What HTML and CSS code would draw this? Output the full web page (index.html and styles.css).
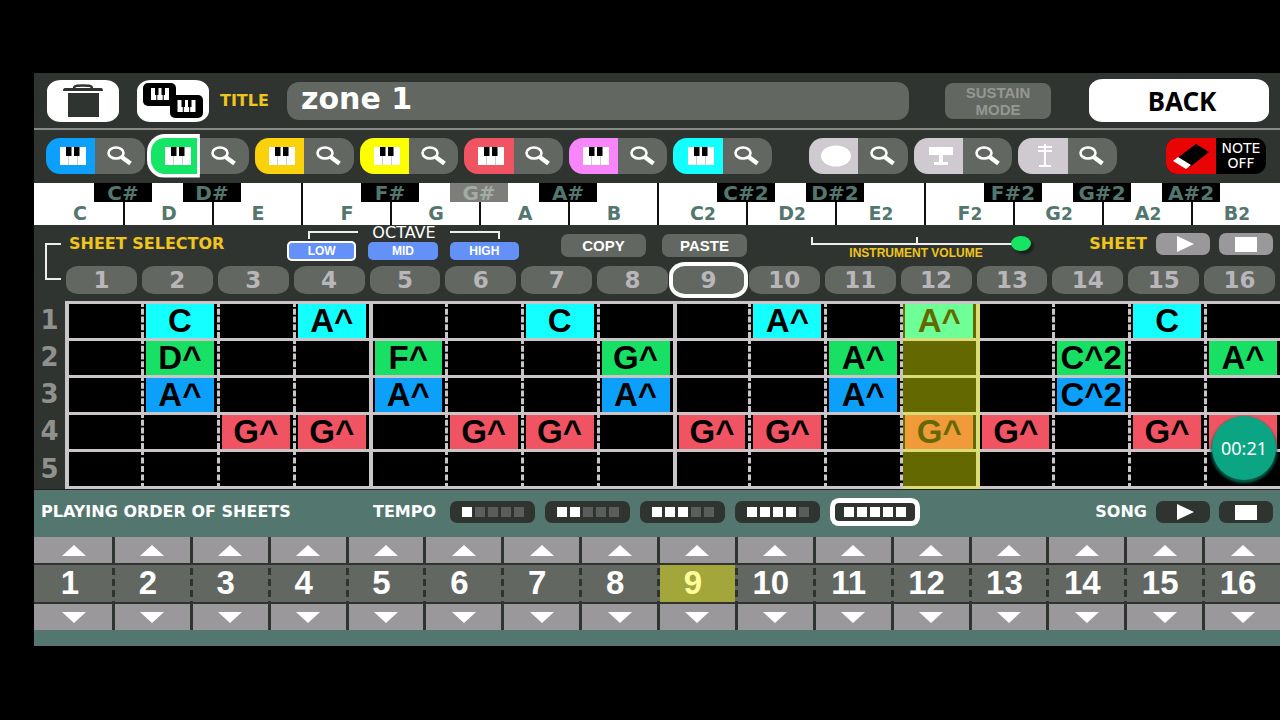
FILE: index.html
```html
<!DOCTYPE html>
<html lang="en">
<head>
<meta charset="utf-8">
<meta name="viewport" content="width=device-width, initial-scale=1">
<title>zone 1</title>
<link rel="stylesheet" href="styles.css">
</head>
<body>
<svg class="sprite" aria-hidden="true">
  <symbol id="i-keys" viewBox="0 0 26 18"><path fill="#fff" d="M0 0h26v18H0z"/><path stroke="#0003" stroke-width="1" d="M8.500 9v9M17.500 9v9"/><path fill="#000" d="M6 0h5.500v9H6zM14 0h5.500v9H14z"/></symbol>
  <symbol id="i-zoom" viewBox="0 0 26 20"><ellipse cx="9" cy="7" rx="7.500" ry="5.500" fill="none" stroke="#fff" stroke-width="2.600"/><path d="M14 10.500l9.500 7" stroke="#fff" stroke-width="4.500"/></symbol>
  <symbol id="i-trash" viewBox="0 0 42 34"><path d="M12 4.500c0-3 3-3 9-3s9 0 9 3" fill="none" stroke="#2f3430" stroke-width="2.500"/><path fill="#2f3430" d="M3 4h36q2 0 2 3H1q0-3 2-3zM6 9h31v24H6z"/></symbol>
  <symbol id="i-copykeys" viewBox="0 0 60 36"><rect width="33" height="23" rx="5"/><rect x="27" y="12" width="33" height="23" rx="5"/><g id="mini"><path fill="#fff" d="M8 5h18v12H8z"/><path d="M12 5h3.500v7H12zM18.500 5H22v7h-3.500zM13.300 12h1v5h-1zM19.700 12h1v5h-1z"/></g><use href="#mini" x="26.500" y="12"/></symbol>
  <symbol id="i-drum" viewBox="0 0 30 22"><ellipse cx="15" cy="11" rx="15" ry="10.500" fill="#fff"/></symbol>
  <symbol id="i-snare" viewBox="0 0 24 18"><path fill="#fff" d="M0 0h24v8H14v7h5v3H5v-3h5V8H0z"/></symbol>
  <symbol id="i-hat" viewBox="0 0 16 24"><path fill="#fff" d="M7 0h2v21h5v2H2v-2h5zM1 2h14v2H1zM1 6h14v2H1z"/></symbol>
  <symbol id="i-eraser" viewBox="0 0 38 26"><path d="M24 1l13 8-19 15-14-8z"/><path fill="#fff" d="M6 14l13 8-5 4-13-8z"/></symbol>
  <symbol id="i-play" viewBox="0 0 17 16"><path fill="#fff" d="M0 0l17 8-17 8z"/></symbol>
  <symbol id="i-stop" viewBox="0 0 22 15"><path fill="#fff" d="M0 0h22v15H0z"/></symbol>
  <symbol id="i-up" viewBox="0 0 24 11"><path fill="#fff" d="M12 0l12 11H0z"/></symbol>
  <symbol id="i-down" viewBox="0 0 24 11"><path fill="#fff" d="M0 0h24L12 11z"/></symbol>
</svg>

<main class="app">
  <header class="titlebar">
    <button class="tile" aria-label="Delete"><svg class="trash-icon"><use href="#i-trash"/></svg></button>
    <button class="tile" aria-label="Duplicate"><svg class="dup-icon"><use href="#i-copykeys"/></svg></button>
    <label class="caption" for="title">TITLE</label>
    <input class="title-input" id="title" type="text" value="zone 1">
    <button class="sustain" disabled>SUSTAIN<br>MODE</button>
    <button class="back">BACK</button>
  </header>

  <nav class="instruments" aria-label="Instruments">
    <div class="melodic" id="melodic"></div>
    <div class="drums" id="drums"></div>
    <button class="note-off"><span class="note-off-icon"><svg><use href="#i-eraser"/></svg></span><span class="note-off-text">NOTE<br>OFF</span></button>
  </nav>

  <ul class="keyboard" id="keyboard"></ul>

  <section class="sheet-head">
    <span class="bracket"></span>
    <div class="controls">
      <h2 class="caption selector-title">SHEET SELECTOR</h2>
      <div class="octave">
        <div class="octave-head"><span class="octave-line start"></span><span class="octave-name">OCTAVE</span><span class="octave-line end"></span></div>
        <div class="octave-buttons"><button class="selected">LOW</button><button>MID</button><button>HIGH</button></div>
      </div>
      <div class="clipboard"><button>COPY</button><button>PASTE</button></div>
      <div class="volume">
        <input id="volume" type="range" min="0" max="100" value="100">
        <label for="volume">INSTRUMENT VOLUME</label>
      </div>
      <div class="transport">
        <span class="caption">SHEET</span>
        <button aria-label="Play sheet"><svg class="play"><use href="#i-play"/></svg></button>
        <button aria-label="Stop sheet"><svg class="stop"><use href="#i-stop"/></svg></button>
      </div>
    </div>
    <div class="sheets" id="sheets"></div>
  </section>

  <section class="pattern">
    <table><tbody id="grid"></tbody></table>
    <div class="timer">00:21</div>
  </section>

  <section class="song">
    <div class="song-bar">
      <h2 class="song-label order-title">PLAYING ORDER OF SHEETS</h2>
      <span class="song-label">TEMPO</span>
      <div class="tempos" id="tempos"></div>
      <div class="transport dark">
        <span class="song-label">SONG</span>
        <button aria-label="Play song"><svg class="play"><use href="#i-play"/></svg></button>
        <button aria-label="Stop song"><svg class="stop"><use href="#i-stop"/></svg></button>
      </div>
    </div>
    <div class="order" id="order"></div>
  </section>
</main>
<script src="app.js"></script>
</body>
</html>
```

FILE: styles.css
```css
:root {
  --dark: #2f3430;
  --gray: #636762;
  --light: #9b989c;
  --line: #c9c5c9;
  --teal: #53776f;
  --gold: #f0c51c;
  --wide: "DejaVu Sans", Verdana, sans-serif;
  --plain: "Liberation Sans", Arial, sans-serif;
}
* { box-sizing: border-box; }
body {
  margin: 0;
  padding: 73px 0 73px 34px;
  background: #000;
  color: #fff;
  font-family: var(--plain);
}
button { border: 0; padding: 0; margin: 0; color: inherit; font: inherit; cursor: pointer; }
h2 { margin: 0; }
.sprite { position: absolute; width: 0; height: 0; }
.app { background: var(--dark); overflow: hidden; }
.caption { color: var(--gold); font: bold 16px/20px var(--wide); }

.titlebar {
  display: flex;
  align-items: center;
  height: 57px;
  padding: 0 11px 0 13px;
  border-bottom: 2px solid #898b86;
}
.tile {
  display: grid;
  place-items: center;
  width: 72px;
  height: 42px;
  margin-right: 18px;
  border-radius: 14px / 11px;
  background: #fff;
}
.tile + .caption { width: 67px; margin-left: -7px; }
.trash-icon { width: 42px; height: 34px; }
.dup-icon { width: 60px; height: 36px; }
.title-input {
  flex: 1;
  min-width: 0;
  height: 38px;
  margin-right: 36px;
  padding: 0 14px 4px;
  border: 0;
  border-radius: 12px;
  background: var(--gray);
  color: #fff;
  font: bold 30px/34px var(--wide);
}
.sustain {
  width: 106px;
  height: 36px;
  margin-right: 38px;
  border-radius: 8px;
  background: var(--gray);
  color: #959792;
  font: bold 15px/17px var(--plain);
}
.back {
  width: 180px;
  height: 43px;
  padding-left: 6px;
  border-radius: 14px / 11px;
  background: #fff;
  color: #000;
  font: bold 26px/36px "Noto Sans", sans-serif;
}

.instruments {
  display: flex;
  align-items: center;
  height: 53px;
  padding: 0 14px 2px 12px;
}
.melodic, .drums { display: grid; gap: 6px; }
.melodic { flex: 726; grid-template-columns: repeat(7, 1fr); margin-right: 37px; }
.drums { flex: 308; grid-template-columns: repeat(3, 1fr); margin-right: 49px; }
.instrument { display: grid; grid-template-columns: 1fr 1fr; height: 36px; }
.instrument button { display: grid; place-items: center; }
.instrument .voice { padding-left: 5px; border-radius: 14px 0 0 14px; }
.voice.selected {
  box-shadow: 0 0 0 4px #fff, inset -3px 0 #fff;
  clip-path: inset(-4px 0 -4px -4px);
}
.search { border-radius: 0 14px 14px 0; background: var(--gray); }
.search svg { width: 26px; height: 20px; }
.i-keys { width: 26px; height: 18px; }
.i-drum { width: 30px; height: 22px; }
.i-snare { width: 24px; height: 18px; }
.i-hat { width: 16px; height: 24px; }
.blue { background: #0ca0fb; }
.green { background: #14e565; }
.gold { background: #fad20c; }
.yellow { background: #fcff00; }
.red { background: #f05462; }
.pink { background: #f686fa; }
.cyan { background: #14ffff; }
.drum { background: #cfcacf; }
.note-off {
  display: grid;
  grid-template-columns: 1fr 1fr;
  flex: 0 0 100px;
  height: 36px;
  overflow: hidden;
  border-radius: 11px;
  background: #000;
}
.note-off-icon { display: grid; place-items: center; background: #e80404; }
.note-off-icon svg { width: 38px; height: 26px; }
.note-off-text { align-self: center; font: 14px/15px var(--wide); }

.keyboard { display: flex; margin: 0; padding: 0; list-style: none; }
.keyboard li { position: relative; flex: 1; border-left: 2px solid #111; }
.keyboard li:first-child { border-color: #fff; }
.white-key {
  display: block;
  width: 100%;
  height: 42px;
  padding: 18px 0 0 1px;
  background: #fff;
  color: var(--teal);
  font: bold 19px/24px var(--wide);
}
.white-key small { font-size: 17px; }
.black-key {
  position: absolute;
  z-index: 1;
  top: 0;
  right: -29px;
  width: 58px;
  height: 19px;
  background: #000;
  color: var(--teal);
  font: bold 20px/21px var(--wide);
}
.black-key:disabled { background: #7d7d7a; color: #a3aca7; }

.sheet-head {
  display: grid;
  grid-template-columns: 32px 1fr;
  grid-template-rows: 41px 28px;
  padding: 0 5px 7px 0;
}
.bracket {
  grid-row: 1 / 3;
  width: 16px;
  height: 37px;
  margin: 18px 0 0 11px;
  border: 2px solid #eee;
  border-right: 0;
}
.controls { display: flex; align-items: flex-start; }
.selector-title { width: 218px; margin: 9px 0 0 3px; white-space: nowrap; }
.octave { width: 232px; margin-right: 42px; }
.octave-head { display: flex; height: 16px; padding: 0 19px 0 21px; }
.octave-name { flex: 0 0 auto; margin: 0 14px; font: 16px/16px var(--wide); }
.octave-line { flex: 1; height: 8px; margin-top: 6px; border-top: 2px solid #eee; }
.octave-line.start { border-left: 2px solid #eee; }
.octave-line.end { border-right: 2px solid #eee; }
.octave-buttons { display: grid; grid-template-columns: repeat(3, 1fr); gap: 12px; }
.octave-buttons button {
  height: 18px;
  margin-top: 1px;
  border-radius: 5px;
  background: #6491f8;
  font: bold 12px/18px var(--plain);
}
.octave-buttons .selected { box-shadow: inset 0 0 0 2px #fff; height: 20px; margin-top: 0; }
.clipboard { display: flex; gap: 16px; margin: 9px 64px 0 0; }
.clipboard button {
  width: 85px;
  height: 23px;
  border-radius: 7px;
  background: var(--gray);
  font: bold 15px/23px var(--plain);
}
.volume { display: flex; flex-direction: column; align-items: center; width: 220px; padding-top: 10px; }
.volume input {
  appearance: none;
  width: 100%;
  height: 16px;
  margin: 0;
  background:
    linear-gradient(#eee, #eee) 0 8px / 210px 2px no-repeat,
    linear-gradient(#eee, #eee) 0 2px / 2px 8px no-repeat,
    linear-gradient(#eee, #eee) 105px 2px / 2px 8px no-repeat;
}
.volume input::-webkit-slider-thumb {
  appearance: none;
  width: 20px;
  height: 15px;
  border-radius: 50%;
  background: #16e462;
  box-shadow: 3px 3px 2px #1b1e1b;
}
.volume label { margin: -4px 10px 0 0; color: var(--gold); font: bold 12px/12px var(--plain); }
.transport { display: flex; align-items: center; gap: 9px; margin: 8px 2px 0 auto; }
.transport button {
  display: grid;
  place-items: center;
  width: 54px;
  height: 22px;
  border-radius: 7px;
  background: var(--light);
}
.transport.dark { margin: 0 7px 0 auto; }
.transport.dark button { background: var(--dark); }
.play { width: 17px; height: 16px; margin-left: 5px; }
.stop { width: 22px; height: 15px; }
.sheets { display: grid; grid-template-columns: repeat(16, 1fr); gap: 5px; }
.sheets button {
  border-radius: 12px / 10px;
  background: var(--gray);
  color: #b9b6b9;
  font: bold 23px/28px var(--wide);
}
.sheets .selected { box-shadow: 0 0 0 4px #fff; }

.pattern { position: relative; }
.pattern table {
  width: 100%;
  table-layout: fixed;
  border-spacing: 0;
  border-bottom: 1px solid #222;
}
.pattern th {
  width: 31px;
  padding: 0;
  color: #90908d;
  font: bold 26px/34px var(--wide);
}
.pattern td {
  position: relative;
  height: 37px;
  padding: 0 3px 0 2px;
  border-top: 3px solid var(--line);
  border-left: 3px dashed var(--line);
  background: #000;
  color: #000;
}
.pattern td.bar { border-left: 4px solid var(--line); }
.pattern tr:last-child td { height: 40px; border-bottom: 3px solid var(--line); }
.pattern td.playing::after {
  content: "";
  position: absolute;
  z-index: 1;
  inset: 0 -4px -3px 0;
  background: rgb(240 255 0 / 41%);
}
.note {
  display: block;
  width: 100%;
  height: 34px;
  color: #000;
  font: bold 33px/34px var(--plain);
}
.note.green { background: #18e064; }
.timer {
  position: absolute;
  z-index: 2;
  right: 4px;
  top: 115px;
  width: 64px;
  height: 64px;
  border-radius: 50%;
  background: #0ba583;
  box-shadow: 0 2px 3px 1px #08604d;
  font: 18px/64px "Noto Sans", sans-serif;
  text-align: center;
}

.song { padding-bottom: 16px; background: var(--teal); }
.song-bar { display: flex; align-items: center; height: 47px; padding: 0 0 3px 7px; }
.song-label { font: bold 16px/20px var(--wide); white-space: nowrap; }
.order-title { width: 332px; }
.tempos { display: flex; gap: 10px; margin-left: 14px; }
.tempos button {
  display: flex;
  justify-content: center;
  align-items: center;
  gap: 3px;
  width: 85px;
  height: 22px;
  border-radius: 7px;
  background: var(--dark);
}
.tempos .selected { width: 80px; height: 18px; margin: 2px 0 0 5px; box-shadow: 0 0 0 5px #fff; border-radius: 4px; }
.tempos i { width: 10px; height: 10px; background: #5b5d5a; }
.tempos .on { background: #fff; }
.order { display: grid; grid-template-columns: repeat(16, 1fr); }
.step { border-left: 3px solid var(--dark); }
.step:first-child { border-color: var(--light); }
.step button { display: grid; place-items: center; width: 100%; height: 26px; background: var(--light); }
.step svg { width: 24px; height: 11px; }
.step output {
  display: block;
  height: 41px;
  margin-left: -3px;
  padding-right: 6px;
  border: solid var(--dark);
  border-width: 2px 0;
  background: linear-gradient(var(--dark) 67%, var(--gray) 0) left 3px / 3px 11px repeat-y var(--gray);
  font: bold 33px/35px var(--plain);
  text-align: center;
}
.step:first-child output { background-image: none; }
.step .current { background-color: #a3a63a; color: #ffff9c; }
```

FILE: app.js
```js
const byId = (id) => document.getElementById(id);
const icon = (name) => `<svg class="${name}"><use href="#${name}"/></svg>`;
const range = (n) => Array.from({ length: n }, (_, i) => i + 1);

const instrument = (color, glyph, selected) => `
  <div class="instrument">
    <button class="voice ${color} ${selected ? 'selected' : ''}" aria-label="${color} instrument">${icon(glyph)}</button>
    <button class="search" aria-label="Browse ${color} sounds">${icon('i-zoom')}</button>
  </div>`;

byId('melodic').innerHTML = ['blue', 'green', 'gold', 'yellow', 'red', 'pink', 'cyan']
  .map((color) => instrument(color, 'i-keys', color === 'green')).join('');
byId('drums').innerHTML = ['i-drum', 'i-snare', 'i-hat']
  .map((glyph) => instrument('drum', glyph, false)).join('');

byId('keyboard').innerHTML = ['', '2'].flatMap((octave) => [...'CDEFGAB'].map((key) => {
  const sharp = 'EB'.includes(key) ? '' :
    `<button class="black-key" ${key + octave === 'G' ? 'disabled' : ''}>${key}#${octave}</button>`;
  return `<li><button class="white-key">${key}<small>${octave}</small></button>${sharp}</li>`;
})).join('');

byId('sheets').innerHTML = range(16)
  .map((n) => `<button class="${n === 9 ? 'selected' : ''}">${n}</button>`).join('');

const playhead = 12;
const rows = [
  { color: 'cyan', notes: { 2: 'C', 4: 'A^', 7: 'C', 10: 'A^', 12: 'A^', 15: 'C' } },
  { color: 'green', notes: { 2: 'D^', 5: 'F^', 8: 'G^', 11: 'A^', 14: 'C^2', 16: 'A^' } },
  { color: 'blue', notes: { 2: 'A^', 5: 'A^', 8: 'A^', 11: 'A^', 14: 'C^2' } },
  { color: 'red', notes: { 3: 'G^', 4: 'G^', 6: 'G^', 7: 'G^', 9: 'G^', 10: 'G^', 12: 'G^', 13: 'G^', 15: 'G^', 16: 'G^' } },
  { color: '', notes: {} },
];
byId('grid').innerHTML = rows.map(({ color, notes }, r) => `<tr><th scope="row">${r + 1}</th>${
  range(16).map((n) => {
    const note = notes[n] ? `<button class="note ${color}">${notes[n]}</button>` : '';
    return `<td class="${n % 4 === 1 ? 'bar' : ''} ${n === playhead ? 'playing' : ''}">${note}</td>`;
  }).join('')}</tr>`).join('');

byId('tempos').innerHTML = range(5).map((level) =>
  `<button class="${level === 5 ? 'selected' : ''}" aria-label="Tempo ${level}">${
    range(5).map((n) => `<i class="${n <= level ? 'on' : ''}"></i>`).join('')}</button>`).join('');

byId('order').innerHTML = range(16).map((n) => `
  <div class="step">
    <button aria-label="Next sheet in slot ${n}">${icon('i-up')}</button>
    <output class="${n === 9 ? 'current' : ''}">${n}</output>
    <button aria-label="Previous sheet in slot ${n}">${icon('i-down')}</button>
  </div>`).join('');
```
